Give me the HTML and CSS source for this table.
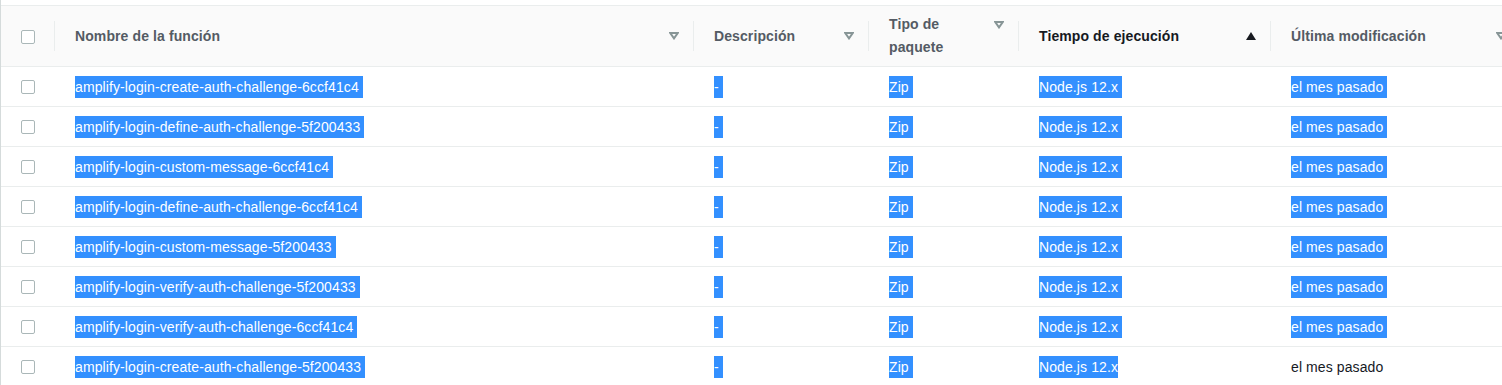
FILE: index.html
```html
<!DOCTYPE html>
<html lang="es">
<head>
<meta charset="utf-8">
<title>Funciones</title>
<link rel="stylesheet" href="styles.css">
</head>
<body>
<div class="page">
  <div class="table">
    <div class="row head">
      <div class="cell check"><span class="box"></span></div>
      <div class="cell hcell"><span class="label">Nombre de la función</span><svg class="tri" width="10" height="8" viewBox="0 0 10 8"><polygon points="1.2,1 8.8,1 5,6.4" fill="none" stroke="#879596" stroke-width="2"/></svg></div>
      <div class="cell hcell"><span class="label">Descripción</span><svg class="tri" width="10" height="8" viewBox="0 0 10 8"><polygon points="1.2,1 8.8,1 5,6.4" fill="none" stroke="#879596" stroke-width="2"/></svg></div>
      <div class="cell hcell"><span class="label">Tipo de paquete</span><svg class="tri" width="10" height="8" viewBox="0 0 10 8"><polygon points="1.2,1 8.8,1 5,6.4" fill="none" stroke="#879596" stroke-width="2"/></svg></div>
      <div class="cell hcell sorted"><span class="label">Tiempo de ejecución</span><svg class="tri" width="10" height="8" viewBox="0 0 10 8"><polygon points="0,8 10,8 5,0" fill="#16191f"/></svg></div>
      <div class="cell hcell"><span class="label">Última modificación</span><svg class="tri" width="10" height="8" viewBox="0 0 10 8"><polygon points="1.2,1 8.8,1 5,6.4" fill="none" stroke="#879596" stroke-width="2"/></svg></div>
    </div>

    <div class="row">
      <div class="cell check"><span class="box"></span></div>
      <div class="cell"><span class="sel">amplify-login-create-auth-challenge-6ccf41c4</span></div>
      <div class="cell"><span class="sel">-</span></div>
      <div class="cell"><span class="sel">Zip</span></div>
      <div class="cell"><span class="sel">Node.js 12.x</span></div>
      <div class="cell"><span class="sel">el mes pasado</span></div>
    </div>
    <div class="row">
      <div class="cell check"><span class="box"></span></div>
      <div class="cell"><span class="sel">amplify-login-define-auth-challenge-5f200433</span></div>
      <div class="cell"><span class="sel">-</span></div>
      <div class="cell"><span class="sel">Zip</span></div>
      <div class="cell"><span class="sel">Node.js 12.x</span></div>
      <div class="cell"><span class="sel">el mes pasado</span></div>
    </div>
    <div class="row">
      <div class="cell check"><span class="box"></span></div>
      <div class="cell"><span class="sel">amplify-login-custom-message-6ccf41c4</span></div>
      <div class="cell"><span class="sel">-</span></div>
      <div class="cell"><span class="sel">Zip</span></div>
      <div class="cell"><span class="sel">Node.js 12.x</span></div>
      <div class="cell"><span class="sel">el mes pasado</span></div>
    </div>
    <div class="row">
      <div class="cell check"><span class="box"></span></div>
      <div class="cell"><span class="sel">amplify-login-define-auth-challenge-6ccf41c4</span></div>
      <div class="cell"><span class="sel">-</span></div>
      <div class="cell"><span class="sel">Zip</span></div>
      <div class="cell"><span class="sel">Node.js 12.x</span></div>
      <div class="cell"><span class="sel">el mes pasado</span></div>
    </div>
    <div class="row">
      <div class="cell check"><span class="box"></span></div>
      <div class="cell"><span class="sel">amplify-login-custom-message-5f200433</span></div>
      <div class="cell"><span class="sel">-</span></div>
      <div class="cell"><span class="sel">Zip</span></div>
      <div class="cell"><span class="sel">Node.js 12.x</span></div>
      <div class="cell"><span class="sel">el mes pasado</span></div>
    </div>
    <div class="row">
      <div class="cell check"><span class="box"></span></div>
      <div class="cell"><span class="sel">amplify-login-verify-auth-challenge-5f200433</span></div>
      <div class="cell"><span class="sel">-</span></div>
      <div class="cell"><span class="sel">Zip</span></div>
      <div class="cell"><span class="sel">Node.js 12.x</span></div>
      <div class="cell"><span class="sel">el mes pasado</span></div>
    </div>
    <div class="row">
      <div class="cell check"><span class="box"></span></div>
      <div class="cell"><span class="sel">amplify-login-verify-auth-challenge-6ccf41c4</span></div>
      <div class="cell"><span class="sel">-</span></div>
      <div class="cell"><span class="sel">Zip</span></div>
      <div class="cell"><span class="sel">Node.js 12.x</span></div>
      <div class="cell"><span class="sel">el mes pasado</span></div>
    </div>
    <div class="row">
      <div class="cell check"><span class="box"></span></div>
      <div class="cell"><span class="sel">amplify-login-create-auth-challenge-5f200433</span></div>
      <div class="cell"><span class="sel">-</span></div>
      <div class="cell"><span class="sel">Zip</span></div>
      <div class="cell"><span class="sel end">Node.js 12.x</span></div>
      <div class="cell"><span class="plain">el mes pasado</span></div>
    </div>
  </div>
</div>
</body>
</html>
```

FILE: styles.css
```css
html, body {
  margin: 0;
  padding: 0;
  overflow: hidden;
  background: #ffffff;
}

body {
  font-family: "Liberation Sans", Arial, sans-serif;
  font-size: 14px;
  letter-spacing: 0.1px;
  color: #16191f;
}

.page {
  border-left: 1px solid #d5dbdb;
  padding-top: 5px;
  height: 380px;
}

.table {
  width: 1519px;
  border-top: 1px solid #eaeded;
}

.row {
  display: grid;
  grid-template-columns: 53px 639px 175px 150px 252px 250px;
  height: 39px;
  border-bottom: 1px solid #eaeded;
  align-items: center;
}

.row.head {
  height: 60px;
  background: #fafafa;
}

.cell {
  padding-left: 21px;
  min-width: 0;
  white-space: nowrap;
  line-height: 22px;
}

.cell.check {
  padding-left: 20px;
  display: flex;
  align-items: center;
  height: 100%;
}

.box {
  display: block;
  box-sizing: border-box;
  width: 14px;
  height: 14px;
  border: 1px solid #aab7b8;
  border-radius: 2px;
  background: #ffffff;
}

.head .check {
  padding-top: 1px;
}

.hcell {
  height: 100%;
  display: flex;
  align-items: center;
  padding-right: 14px;
  white-space: normal;
  font-weight: 700;
  color: #545b64;
  background: linear-gradient(#eaeded, #eaeded) left center / 1px 30px no-repeat;
}

.hcell.sorted {
  color: #16191f;
}

.hcell .label {
  flex: 1;
  min-width: 0;
  align-self: center;
  line-height: 23px;
}

.hcell .tri {
  flex: none;
  align-self: center;
  margin-left: 8px;
}

.hcell:nth-child(4) .tri {
  align-self: flex-start;
  margin-top: 15px;
}

.sel {
  display: inline-block;
  line-height: 22px;
  background: #3390ff;
  color: #ffffff;
  padding-right: 4px;
}

.sel.end {
  padding-right: 0;
}

.plain {
  color: #16191f;
}
```
